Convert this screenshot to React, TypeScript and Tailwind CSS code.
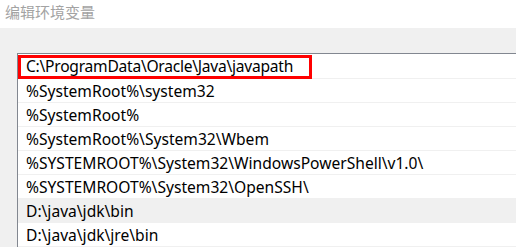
export default function App() {
  const rows = [
    "%SystemRoot%\\system32",
    "%SystemRoot%",
    "%SystemRoot%\\System32\\Wbem",
    "%SYSTEMROOT%\\System32\\WindowsPowerShell\\v1.0\\",
    "%SYSTEMROOT%\\System32\\OpenSSH\\",
  ];
  return (
    <div className="w-[516px] h-[247px] overflow-hidden bg-[#f0f0f0] flex flex-col" style={{ fontFamily: '"Noto Sans", "Noto Sans CJK SC", sans-serif' }}>
      <div className="h-[28px] bg-white shrink-0 flex items-start pl-[5px] pt-[1px] text-[15px] leading-[22px] text-[#a3a3a3]" style={{ fontFamily: '"Noto Sans CJK SC", sans-serif' }}>
        编辑环境变量
      </div>
      <div className="pt-[25px] pl-[17px]">
        <div className="w-[520px] border-t border-l border-[#828790] bg-white text-[15.6px] text-black">
          <div className="h-[25px] border-b border-[#f0f0f0] relative">
            <div className="absolute left-0 top-[1px] w-[294px] h-[24px] border-[3px] border-[#ff0000]"></div>
            <div className="pl-[8px] leading-[25px] tracking-[-0.25px]">C:\ProgramData\Oracle\Java\javapath</div>
          </div>
          {rows.map((r) => (
            <div key={r} className="h-[24px] border-b border-[#f0f0f0] pl-[8px] leading-[24px] whitespace-nowrap">{r}</div>
          ))}
          <div className="h-[24px] bg-[#f0f0f0] pl-[8px] leading-[24px]">D:\java\jdk\bin</div>
          <div className="h-[24px] border-b border-[#f0f0f0] pl-[8px] leading-[24px]">D:\java\jdk\jre\bin</div>
        </div>
      </div>
    </div>
  );
}
